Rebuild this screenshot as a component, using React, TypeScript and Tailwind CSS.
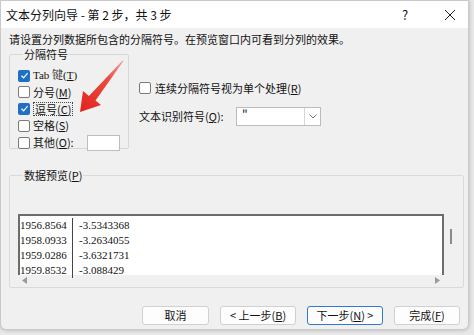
import React from "react";

const CJK = { fontFamily: '"Microsoft YaHei","Noto Sans CJK SC","Noto Sans",sans-serif' };
const SONG = { fontFamily: '"Liberation Serif","Noto Serif CJK SC","Noto Sans CJK SC",serif' };

function Check({ checked }: { checked?: boolean }) {
  return checked ? (
    <span className="w-[12px] h-[12px] rounded-[2px] bg-[#1f6fc5] flex items-center justify-center shrink-0">
      <svg width="9" height="9" viewBox="0 0 9 9">
        <path d="M1.5 4.8 L3.6 6.8 L7.6 2.2" stroke="#fff" strokeWidth="1.2" fill="none" />
      </svg>
    </span>
  ) : (
    <span className="w-[12px] h-[12px] rounded-[2px] bg-white border border-[#7a7a7a] shrink-0" />
  );
}

function Acc({ k }: { k: string }) {
  return (
    <span>
      (<span className="underline">{k}</span>)
    </span>
  );
}

const rows = [
  ["1956.8564", "-3.5343368"],
  ["1958.0933", "-3.2634055"],
  ["1959.0286", "-3.6321731"],
  ["1959.8532", "-3.088429"],
];

export default function App() {
  return (
    <div className="w-[474px] h-[335px] overflow-hidden bg-[#e9e9e9] relative" style={CJK}>
      <div className="w-[469px] h-[330px] bg-[#f0f0f0] border border-[#c9c9c9] rounded-b-[6px] flex flex-col shadow-[0_0_4px_rgba(0,0,0,0.25)]">
        {/* title bar */}
        <div className="h-[27px] bg-white flex items-center pl-[5px] text-[12px] text-[#111] shrink-0">
          <span>文本分列向导 - 第 2 步，共 3 步</span>
          <span className="ml-auto w-[16px] text-center text-[13px] mr-[31px]">?</span>
          <svg width="12" height="12" viewBox="0 0 12 12" className="mr-[12px]">
            <path d="M1 1 L11 11 M11 1 L1 11" stroke="#222" strokeWidth="1" />
          </svg>
        </div>
        {/* body */}
        <div className="px-[8px] flex flex-col text-[11px] text-[#111]">
          <div className="mt-[3px] h-[16px] leading-[16px]">请设置分列数据所包含的分隔符号。在预览窗口内可看到分列的效果。</div>
          <div className="flex mt-[1px]">
            <fieldset className="w-[120px] h-[101px] border border-[#d7d7d7] rounded-[2px] pl-[8px] pt-[7px]">
              <legend className="ml-[5px] px-[1px] text-[11px] leading-[12px]">分隔符号</legend>
              <div className="flex flex-col">
                <div className="h-[17px] flex items-center gap-[3px]">
                  <Check checked />
                  <span style={SONG}>Tab 键<Acc k="T" /></span>
                </div>
                <div className="h-[16px] flex items-center gap-[3px]">
                  <Check />
                  <span>分号<Acc k="M" /></span>
                </div>
                <div className="h-[17px] flex items-center gap-[3px]">
                  <Check checked />
                  <span className="border border-dotted border-[#444] px-[1px] leading-[12px]">逗号<Acc k="C" /></span>
                </div>
                <div className="h-[17px] flex items-center gap-[3px]">
                  <Check />
                  <span>空格<Acc k="S" /></span>
                </div>
                <div className="h-[17px] flex items-center gap-[3px]">
                  <Check />
                  <span>其他<Acc k="O" />:</span>
                  <span className="ml-[10px] w-[33px] h-[16px] bg-white border border-[#bdbdbd]" />
                </div>
              </div>
            </fieldset>
            <div className="ml-[10px] flex flex-col pt-[33px]">
              <div className="flex items-center gap-[4px] h-[14px]">
                <Check />
                <span>连续分隔符号视为单个处理<Acc k="R" /></span>
              </div>
              <div className="flex items-center mt-[12px]">
                <span className="w-[97px]">文本识别符号<Acc k="Q" />:</span>
                <div className="w-[85px] h-[19px] bg-white border border-[#bcbcbc] flex">
                  <span className="flex-1 pl-[5px] leading-[12px] text-[12px]">"</span>
                  <span className="w-[16px] border-l border-[#d5d5d5] flex items-center justify-center">
                    <svg width="8" height="5" viewBox="0 0 8 5">
                      <path d="M0.5 0.5 L4 4 L7.5 0.5" stroke="#777" fill="none" strokeWidth="1" />
                    </svg>
                  </span>
                </div>
              </div>
            </div>
          </div>
          {/* preview */}
          <fieldset className="mt-[20px] w-[455px] h-[119px] border border-[#dadada] rounded-[2px] px-[8px] flex flex-col">
            <legend className="ml-[5px] px-[1px] text-[11px] leading-[12px]">数据预览<Acc k="P" /></legend>
            <div className="flex mt-[33px] items-start">
              <div className="w-[426px] h-[61px] bg-white border-[2px] border-b-0 border-[#6c6c6c] flex flex-col pt-[2px]" style={SONG}>
                {rows.map(([a, b]) => (
                  <div key={a} className="h-[15px] flex items-center text-[11px] text-[#111]">
                    <span className="w-[53px] h-full flex items-center border-r border-[#444]">{a}</span>
                    <span className="pl-[6px]">{b}</span>
                  </div>
                ))}
              </div>
              <div className="ml-[6px] mt-[15px] w-[2px] h-[15px] bg-[#8a8a8a]" />
            </div>
            <div className="flex items-center h-[10px] px-[4px] w-[426px]">
              <svg width="5" height="7" viewBox="0 0 5 7"><path d="M5 0 L0 3.5 L5 7 Z" fill="#9a9a9a" /></svg>
              <svg width="5" height="7" viewBox="0 0 5 7" className="ml-auto"><path d="M0 0 L5 3.5 L0 7 Z" fill="#9a9a9a" /></svg>
            </div>
          </fieldset>
          {/* buttons */}
          <div className="flex justify-end gap-[11px] mt-[18px] text-[11px]">
            <button className="w-[67px] h-[19px] bg-[#fdfdfd] border border-[#d0d0d0] rounded-[3px]">取消</button>
            <button className="w-[76px] h-[19px] bg-[#fdfdfd] border border-[#d0d0d0] rounded-[3px]">&lt; 上一步<Acc k="B" /></button>
            <button className="w-[76px] h-[19px] bg-[#fdfdfd] border border-[#2f7ad0] rounded-[3px]">下一步<Acc k="N" /> &gt;</button>
            <button className="w-[66px] h-[19px] bg-[#fdfdfd] border border-[#d0d0d0] rounded-[3px]">完成<Acc k="F" /></button>
          </div>
        </div>
      </div>
      {/* red arrow overlay */}
      <svg className="absolute left-0 top-0 pointer-events-none" width="474" height="335" viewBox="0 0 474 335">
        <defs>
          <linearGradient id="ar" x1="123" y1="61" x2="80" y2="112" gradientUnits="userSpaceOnUse">
            <stop offset="0" stopColor="#f4a3a0" />
            <stop offset="0.35" stopColor="#ec4a42" />
            <stop offset="1" stopColor="#e2231c" />
          </linearGradient>
        </defs>
        <path d="M123.5 61 L95.5 100.5 L101 105 L80 112 L83 91 L89 96 L122.5 60.5 Z" fill="url(#ar)" />
      </svg>
    </div>
  );
}
